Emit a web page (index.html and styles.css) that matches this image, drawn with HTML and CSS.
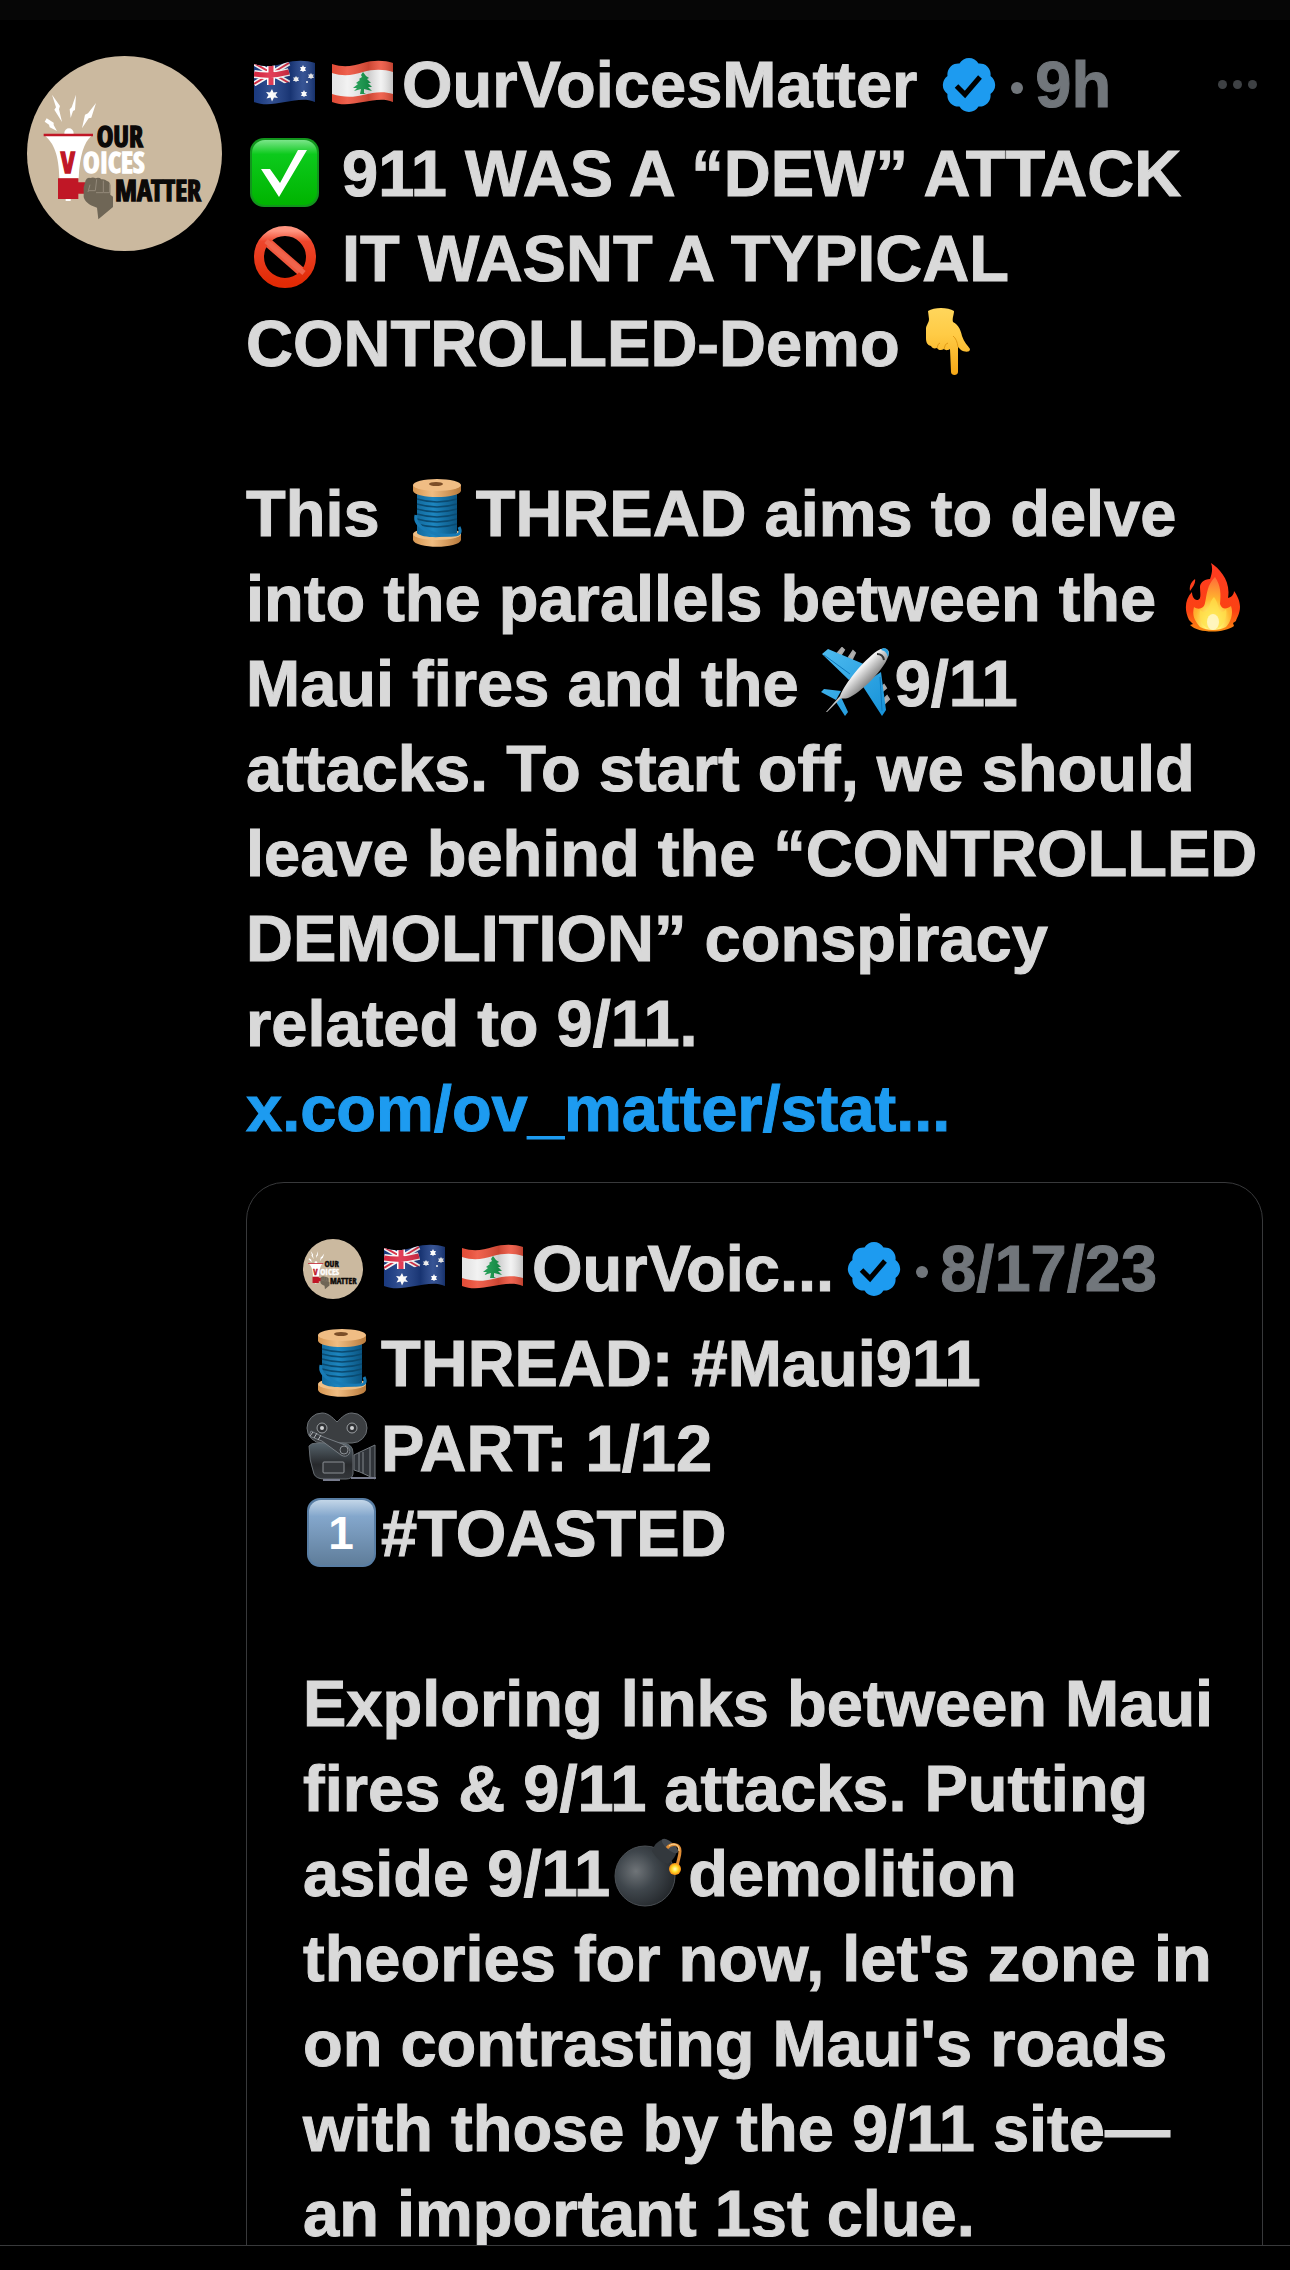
FILE: index.html
```
<!DOCTYPE html>
<html lang="en">
<head>
    <meta charset="UTF-8">
    <meta name="viewport" content="width=device-width, initial-scale=1.0">
    <title>OurVoicesMatter</title>
    <link rel="stylesheet" href="styles.css">
</head>
<body>

    <!-- Shared icons -->
    <svg class="sprite" aria-hidden="true">
        <defs>
            <linearGradient id="green" x1="0" y1="0" x2="0" y2="1">
                <stop offset="0" stop-color="#7be58a"/>
                <stop offset="0.22" stop-color="#0cca1c"/>
                <stop offset="1" stop-color="#00b400"/>
            </linearGradient>
            <linearGradient id="red" x1="0" y1="0" x2="0" y2="1">
                <stop offset="0" stop-color="#ff9580"/>
                <stop offset="0.2" stop-color="#ee462c"/>
                <stop offset="1" stop-color="#e12a05"/>
            </linearGradient>
            <linearGradient id="skin" x1="0" y1="0" x2="0" y2="1">
                <stop offset="0" stop-color="#ffd65c"/>
                <stop offset="0.4" stop-color="#ffcb45"/>
                <stop offset="1" stop-color="#f5a716"/>
            </linearGradient>
            <linearGradient id="wood" x1="0" y1="0" x2="1" y2="0">
                <stop offset="0" stop-color="#d79752"/>
                <stop offset="0.4" stop-color="#f0bd82"/>
                <stop offset="1" stop-color="#b87a3c"/>
            </linearGradient>
            <linearGradient id="thread" x1="0" y1="0" x2="1" y2="0">
                <stop offset="0" stop-color="#126a9d"/>
                <stop offset="0.4" stop-color="#1d86c0"/>
                <stop offset="1" stop-color="#0b5582"/>
            </linearGradient>
            <linearGradient id="flame" x1="0" y1="0" x2="0" y2="1">
                <stop offset="0" stop-color="#ff3a22"/>
                <stop offset="0.7" stop-color="#fb4213"/>
                <stop offset="1" stop-color="#f98b12"/>
            </linearGradient>
            <radialGradient id="flameCore" cx="0.5" cy="0.88" r="0.85">
                <stop offset="0" stop-color="#fffbe0"/>
                <stop offset="0.25" stop-color="#fff06c"/>
                <stop offset="0.55" stop-color="#ffb52e"/>
                <stop offset="1" stop-color="#ff7038"/>
            </radialGradient>
            <linearGradient id="hull" x1="0.2" y1="0.2" x2="0.7" y2="0.7">
                <stop offset="0.2" stop-color="#c4c4c4"/>
                <stop offset="0.45" stop-color="#f5f5f5"/>
                <stop offset="0.8" stop-color="#8c8c8c"/>
            </linearGradient>
            <linearGradient id="wing" x1="0" y1="0" x2="1" y2="1">
                <stop offset="0" stop-color="#4fbcf0"/>
                <stop offset="1" stop-color="#1591d8"/>
            </linearGradient>
            <linearGradient id="metal" x1="0" y1="0" x2="0" y2="1">
                <stop offset="0" stop-color="#56636b"/>
                <stop offset="0.6" stop-color="#27292c"/>
                <stop offset="1" stop-color="#34373b"/>
            </linearGradient>
            <linearGradient id="keycap" x1="0" y1="0" x2="0" y2="1">
                <stop offset="0" stop-color="#c3d6e8"/>
                <stop offset="0.25" stop-color="#84a7cc"/>
                <stop offset="1" stop-color="#5f7d9a"/>
            </linearGradient>
            <radialGradient id="iron" cx="0.35" cy="0.42" r="0.65">
                <stop offset="0" stop-color="#6f7478"/>
                <stop offset="0.5" stop-color="#3f464c"/>
                <stop offset="1" stop-color="#25292d"/>
            </radialGradient>
            <radialGradient id="spark">
                <stop offset="0" stop-color="#fffbd0"/>
                <stop offset="0.5" stop-color="#ffdf2b"/>
                <stop offset="1" stop-color="#f58a13"/>
            </radialGradient>
            <linearGradient id="wave" x1="0" y1="0" x2="1" y2="0">
                <stop offset="0" stop-color="#000" stop-opacity="0.05"/>
                <stop offset="0.25" stop-color="#fff" stop-opacity="0.1"/>
                <stop offset="0.6" stop-color="#000" stop-opacity="0.15"/>
                <stop offset="0.8" stop-color="#fff" stop-opacity="0.12"/>
                <stop offset="1" stop-color="#000" stop-opacity="0.2"/>
            </linearGradient>
            <clipPath id="flagShape">
                <path d="M8 16C20 20 29 18 39 15S60 12 69 15V54C60 50 50 52 39 54S18 58 8 54Z"/>
            </clipPath>
        </defs>

        <symbol id="avatar" viewBox="21 18 585 585">
            <circle cx="313.500" cy="310.500" r="292.500" fill="#cbb99f"/>
            <g fill="#fff">
                <path d="M96 134l24 34-3 10 9 38-23-37 5-7zM168 134l-3 46-6 3-7 21-3-26 6-6zM228 159l-14 44-8 2-20 30 9-41 9-4zM80 205l21 13 0 7 10 18-22-11-2-8-13-9z"/>
                <circle cx="147" cy="249" r="14"/>
                <path d="M76 258h138c-22 18-35 60-38 127h-58c-1-70-17-105-42-127zM137 445h15v8h-15z"/>
            </g>
            <path d="M71 251h148v8H71zM114 385h61v12h22v34h-22v16h-61z" fill="#c01726"/>
            <path d="M197 391q4-10 14-7 8-4 16 1 10-4 17 3 10-2 17 5 9 2 10 13v28l8 6v31l-44 37-4-35c-26-8-37-20-40-32V412z" fill="#6f6656"/>
            <path d="M230 388l-4 34h-20M250 392v36h-22M269 400v28h-18M210 404l-6 22" fill="none" stroke="#93897a" stroke-width="3"/>
            <g class="logo-text">
                <text x="230" y="290">OUR</text>
                <text x="122" y="370" class="logo-red">V</text>
                <text x="189" y="370" class="logo-white">OICES</text>
                <text x="285" y="454">MATTER</text>
            </g>
        </symbol>

        <symbol id="verified" viewBox="0 0 56 56">
            <path d="M18.500 6.500A11 11 0 0 1 37.500 6.500 11 11 0 0 1 49.500 19 11 11 0 0 1 49.500 37 11 11 0 0 1 37.500 49.500 11 11 0 0 1 18.500 49.500 11 11 0 0 1 6.500 37 11 11 0 0 1 6.500 19 11 11 0 0 1 18.500 6.500Z" fill="#1d9bf0"/>
            <path d="M15.500 29l8.500 8.500L39 20" fill="none" stroke="#000" stroke-width="5"/>
        </symbol>

        <symbol id="flag-au" viewBox="0 0 78 70">
            <g clip-path="url(#flagShape)">
                <path d="M8 10h61v50H8z" fill="#1c3d86"/>
                <g>
                    <path d="M8 15l35 20M43 15L8 36" stroke="#fff" stroke-width="5"/>
                    <path d="M8 15l35 20M43 15L8 36" stroke="#dc2c45" stroke-width="2"/>
                    <path d="M25 12v25M8 26q17 3 35-2" fill="none" stroke="#fff" stroke-width="8"/>
                    <path d="M25 12v25M8 26q17 3 35-2" fill="none" stroke="#e02a45" stroke-width="5"/>
                    <path d="M8 38q17 2 35-4v6H8z" fill="#1c3d86"/>
                </g>
                <path d="M26 41l1.500 3.500 4-.5-2 3 2.500 3-4-.5-2 4-1.500-4-4 1 2-3.500-2.500-3 4 .5z" fill="#fff"/>
                <path d="M57 17l1 2 2 0-1 2 1 2-2 0-1 1-1-1-2 0 1-2-1-2 2 0zM50 28l1 1.500h2l-1 1.500 1 2h-2l-1 1-1-1h-2l1-2-1-1.500h2zM65 25l1 1.500h2l-1 1.500 1 2h-2l-1 1-1-1h-2l1-2-1-1.500h2zM58 42l1 2h2l-1 2 1 2h-2l-1 1-1-1h-2l1-2-1-2h2z" fill="#fff"/>
                <circle cx="61" cy="34" r="1" fill="#fff"/>
                <path d="M8 10h61v50H8z" fill="url(#wave)"/>
            </g>
        </symbol>

        <symbol id="flag-lb" viewBox="0 0 78 70">
            <g clip-path="url(#flagShape)">
                <path d="M8 10h61v50H8z" fill="#ee513b"/>
                <path d="M8 25c12 4 21 2 31-1s21-3 30 0v22c-9-3-19-2-30 1s-21 2-31-1z" fill="#f1f1f1"/>
                <path d="M39 24l3 4 3 2-2 1 4 4-3 0 4 4-4 0 4 4-8-2 0 4 2 1-6 0 1-5-7 2 3-3-4 0 5-4-2-1 4-3-1-1 3-2-1-2z" fill="#18a050"/>
                <path d="M8 10h61v50H8z" fill="url(#wave)"/>
            </g>
        </symbol>

        <symbol id="check" viewBox="0 0 78 70">
            <rect x="4" y="1" width="69" height="69" rx="14" fill="#12951d"/>
            <rect x="6" y="3" width="65" height="65" rx="13" fill="url(#green)"/>
            <path d="M15 32h9l10 14 18-33h9L33 60z" fill="#fff"/>
        </symbol>

        <symbol id="prohibited" viewBox="0 0 78 70">
            <path d="M19 18l39 34" stroke="#ef573d" stroke-width="9"/>
            <circle cx="39" cy="35" r="26" fill="none" stroke="url(#red)" stroke-width="10"/>
            <path d="M20 19l38 32" stroke="#f0644c" stroke-width="5"/>
        </symbol>

        <symbol id="point-down" viewBox="9 0 78 70">
            <path d="M19 4c6-4 20-4 26 0 0 4-2 7-1 11 6 3 8 9 9 14 2 6 6 10 8 13 0 4-6 3-9 1l-3-3v25c0 4-7 4-7 0l-1-23c-3 2-5 1-6 0-3 2-6 1-7-1-3 1-5 0-6-2-4-1-5-4-5-8V22c0-4 3-6 3-10z" fill="url(#skin)"/>
            <path d="M28 41q1-5 3-5M35 42q1-6 4-6M49 40q-1-8-5-11" fill="none" stroke="#e29b16" stroke-width="1"/>
        </symbol>

        <symbol id="spool" viewBox="0 0 78 70">
            <path d="M15 58v5c2 9 46 9 48 0v-6c-4-8-44-8-48 1z" fill="url(#wood)"/>
            <ellipse cx="39" cy="57" rx="24" ry="6" fill="#efc087"/>
            <path d="M19 14h40v42c-4 5-36 6-40 0z" fill="url(#thread)"/>
            <path d="M19 22q20 6 40 0M19 27q20 6 40 0M19 32q20 6 40 0M19 37q20 6 40 0M19 42q20 6 40 0M19 47q20 6 40 0" fill="none" stroke="#0a4a70" stroke-width="1.500"/>
            <path d="M18 38c-3 12 18 22 38 20 7 0 7-4 5-8" fill="none" stroke="#187bb5" stroke-width="3"/>
            <path d="M15 8v6c3 8 45 8 48 0V8z" fill="url(#wood)"/>
            <ellipse cx="39" cy="8" rx="24" ry="6" fill="#f0bd84"/>
            <ellipse cx="38" cy="7" rx="7" ry="2" fill="#7c4e28"/>
        </symbol>

        <symbol id="fire" viewBox="0 0 78 70">
            <path d="M37 1c9 6 20 18 17 35 4-1 6-4 6-7 3 4 6 10 6 16 0 7-4 12-4 14l-3 2 1 3c-9 7-35 8-44-1l3-1-4-4c-5-10-4-21 3-28 0 4 2 8 5 8 5 0 3-8 3-13 0-4 4-8 10-8 2-5 3-11 1-16zM16 29c-1-5 1-9 5-12 1 4-2 8-5 12z" fill="url(#flame)"/>
            <path d="M41 15c6 9 6 17 5 27 2 6 7 5 11 2 3 8-1 17-5 21-7 4-19 4-26 0-6-7-8-12-6-20 4 3 10 2 11-4 2-9 2-18 10-26z" fill="url(#flameCore)"/>
            <path d="M40 35c4 5 5 14 7 15 2 0 4-1 5-3 2 8-3 19-12 21-9 0-16-9-14-20 2 2 5 3 7 1 3-5 3-10 7-14z" fill="#ffe04a" opacity="0.700"/>
            <ellipse cx="39" cy="60" rx="6" ry="8" fill="#fffbe0" opacity="0.700"/>
        </symbol>

        <symbol id="plane" viewBox="0 0 78 70">
            <path d="M20 7l5-6 2 2-4 6zM32 10l4-6 2 2-3 6zM60 44l7-6 2 3-7 6zM64 55l6-6 2 3-6 6z" fill="#b9b5b1" stroke="#aaa" stroke-width="2"/>
            <path d="M5 7l6-5 38 16-17 15zM64 25l5 38-4 6-20-31zM4 45l3-3 17 2-5 9zM24 50l7 15-3 4-9-14z" fill="url(#wing)"/>
            <path d="M7 8l26 19M63 30l2 34" stroke="#0d79bd" stroke-width="1"/>
            <path d="M9 65l14-16C28 36 47 13 60 4c6-4 12-3 12 2C70 21 42 47 31 51c-3 1-6 0-8 1L10 65z" fill="url(#hull)"/>
            <path d="M66 1c4 0 7 3 5 9-1-3-2-6-7-7z" fill="#28a2e2"/>
            <path d="M60 7q6 0 7 6" fill="none" stroke="#333" stroke-width="2"/>
        </symbol>

        <symbol id="camera" viewBox="0 0 78 70">
            <path d="M51 43l6-3 15-7v34l-15-7-6-2z" fill="#303439" stroke="#747a80" stroke-width="1"/>
            <path d="M56 41v18M60 40v21M67 36v28" stroke="#81878d" stroke-width="1"/>
            <path d="M19 1c6 0 10 4 15 9 5-5 9-9 15-9a15 15 0 0 1 0 30H19a15 15 0 0 1 0-30z" fill="#3b3e41" stroke="#6b7075" stroke-width="1"/>
            <circle cx="19" cy="16" r="5" fill="#303235" stroke="#999da0" stroke-width="1"/>
            <circle cx="49" cy="16" r="5" fill="#303235" stroke="#999da0" stroke-width="1"/>
            <circle cx="19" cy="16" r="2" fill="#d0d2d4"/>
            <circle cx="49" cy="16" r="2" fill="#d0d2d4"/>
            <path d="M6 34q2-3 8-3h26q10 1 10 10v21q-1 5-7 5H22q-9 0-11-5Q6 48 6 34z" fill="url(#metal)" stroke="#666c72" stroke-width="1"/>
            <path d="M8 19l10 5 24 9q7 4 4 9-3 4-8 1L19 29 6 24z" fill="#383b3f" stroke="#777d83" stroke-width="1"/>
            <path d="M7 24l3-4M11 26l3-5M15 28l3-5" stroke="#b3b7ba" stroke-width="1"/>
            <circle cx="41" cy="38" r="4" fill="#34373a" stroke="#8b9095" stroke-width="1"/>
            <rect x="20" y="50" width="21" height="11" rx="1" fill="#34373b" stroke="#8b9095" stroke-width="1"/>
            <path d="M20 68h17M48 66h25" stroke="#777b8c" stroke-width="2"/>
        </symbol>

        <symbol id="one" viewBox="0 0 78 70">
            <rect x="4" y="1" width="69" height="69" rx="13" fill="#587da3"/>
            <rect x="6" y="3" width="65" height="65" rx="12" fill="url(#keycap)"/>
            <text x="38" y="52" class="keycap-text">1</text>
        </symbol>

        <symbol id="bomb" viewBox="0 0 78 70">
            <circle cx="35" cy="39" r="30" fill="url(#iron)" stroke="#4a4f54" stroke-width="1"/>
            <path d="M42 14q3-9 11-12 10 3 14 12-2 8-9 13-10-2-16-13z" fill="#33383d"/>
            <ellipse cx="60" cy="9" rx="10" ry="4" transform="rotate(40 60 9)" fill="#454a50"/>
            <path d="M57 11c4-5 13-5 13 3 0 6-2 8-3 16" fill="none" stroke="#e08d36" stroke-width="3"/>
            <path d="M59 9c4-3 10-3 10 5" fill="none" stroke="#ffe0a0" stroke-width="1"/>
            <circle cx="65" cy="32" r="6" fill="url(#spark)"/>
        </symbol>
    </svg>

    <div class="top-bar"></div>

    <main class="feed">
        <article class="post">
            <svg class="avatar" role="img" aria-label="OurVoicesMatter"><use href="#avatar"/></svg>
            <div class="content">
                <header class="post-header">
                    <span class="name"><svg class="emoji"><use href="#flag-au"/></svg><svg class="emoji"><use href="#flag-lb"/></svg>OurVoicesMatter</span>
                    <svg class="verified" role="img" aria-label="Verified"><use href="#verified"/></svg>
                    <span class="dot"></span>
                    <time class="time">9h</time>
                    <button class="more" aria-label="More"><span></span><span></span><span></span></button>
                </header>

                <p class="text">
                    <svg class="emoji"><use href="#check"/></svg> 911 WAS A “DEW” ATTACK<br>
                    <svg class="emoji"><use href="#prohibited"/></svg> IT WASNT A TYPICAL<br>
                    CONTROLLED-Demo <svg class="emoji"><use href="#point-down"/></svg><br>
                    <br>
                    This <svg class="emoji"><use href="#spool"/></svg>THREAD aims to delve<br>
                    into the parallels between the <svg class="emoji"><use href="#fire"/></svg><br>
                    Maui fires and the <svg class="emoji"><use href="#plane"/></svg>9/11<br>
                    attacks. To start off, we should<br>
                    leave behind the “CONTROLLED<br>
                    DEMOLITION” conspiracy<br>
                    related to 9/11.<br>
                    <a href="#">x.com/ov_matter/stat...</a>
                </p>

                <!-- Quoted post -->
                <article class="quote">
                    <header class="post-header">
                        <svg class="avatar-small" role="img" aria-label="OurVoicesMatter"><use href="#avatar"/></svg>
                        <span class="name"><svg class="emoji"><use href="#flag-au"/></svg><svg class="emoji"><use href="#flag-lb"/></svg>OurVoic...</span>
                        <svg class="verified" role="img" aria-label="Verified"><use href="#verified"/></svg>
                        <span class="dot"></span>
                        <time class="time">8/17/23</time>
                    </header>
                    <p class="text">
                        <svg class="emoji"><use href="#spool"/></svg>THREAD: #Maui911<br>
                        <svg class="emoji"><use href="#camera"/></svg>PART: 1/12<br>
                        <svg class="emoji"><use href="#one"/></svg>#TOASTED<br>
                        <br>
                        Exploring links between Maui<br>
                        fires &amp; 9/11 attacks. Putting<br>
                        aside 9/11<svg class="emoji"><use href="#bomb"/></svg>demolition<br>
                        theories for now, let's zone in<br>
                        on contrasting Maui's roads<br>
                        with those by the 9/11 site—<br>
                        an important 1st clue.
                    </p>
                </article>
            </div>
        </article>
    </main>

    <div class="bottom-bar"></div>

</body>
</html>
```
FILE: styles.css
```
* {
    box-sizing: border-box;
}
body {
    display: flex;
    flex-direction: column;
    height: 100vh;
    margin: 0;
    background-color: #000;
    color: #d9d9d9;
    font-family: "Liberation Sans", Arial, sans-serif;
    font-size: 65px;
    font-weight: bold;
    line-height: 85px;
    -webkit-text-stroke: 1px;
}
.sprite {
    position: absolute;
    width: 0;
    height: 0;
}
.top-bar {
    flex: none;
    height: 20px;
    background-color: #060606;
}
.bottom-bar {
    flex: none;
    height: 24px;
}
.feed {
    flex: 1;
    min-height: 0;
    overflow: hidden;
    border-bottom: 1px solid #38393b;
}
.post {
    display: flex;
    gap: 24px;
    padding: 22px 27px 0;
}
.avatar {
    flex: none;
    width: 195px;
    height: 195px;
    margin-top: 14px;
}
.content {
    flex: 1;
    min-width: 0;
}
.post-header {
    display: flex;
    align-items: center;
    margin-bottom: 4px;
    white-space: nowrap;
}
.avatar-small {
    flex: none;
    width: 60px;
    height: 60px;
    margin-right: 13px;
}
.verified {
    flex: none;
    width: 56px;
    height: 56px;
    margin-left: 24px;
}
.dot {
    width: 12px;
    height: 12px;
    margin: 6px 12px 0 14px;
    border-radius: 50%;
    background-color: #71767b;
}
.time {
    color: #71767b;
}
.more {
    display: flex;
    gap: 6px;
    margin-left: auto;
    padding: 6px;
    border: none;
    background: none;
    cursor: pointer;
}
.more span {
    width: 9px;
    height: 9px;
    border-radius: 50%;
    background-color: #3e4144;
}
.text {
    margin: 0;
}
.text a {
    color: #1d9bf0;
    text-decoration: none;
}
.text a:hover {
    text-decoration: underline;
}
.emoji {
    width: 78px;
    height: 70px;
    vertical-align: -11px;
}
.quote {
    margin-top: 31px;
    padding: 43px 24px 60px 56px;
    border: 1px solid #38393b;
    border-radius: 38px;
}
.quote .post-header {
    margin-bottom: 10px;
}
.quote .verified {
    margin-left: 12px;
}

/* Text inside the icons */
.logo-text {
    font-family: "Open Sans Condensed", "Liberation Sans Narrow", "Liberation Sans", sans-serif;
    font-size: 84px;
    font-weight: bold;
    fill: #0b0908;
    stroke: #0b0908;
    stroke-width: 4px;
    -webkit-text-stroke: 4px #0b0908;
}
.logo-red {
    fill: #c01726;
    stroke: #c01726;
    -webkit-text-stroke: 4px #c01726;
}
.logo-white {
    fill: #fff;
    stroke: #fff;
    -webkit-text-stroke: 4px #fff;
}
.keycap-text {
    font-size: 46px;
    font-weight: bold;
    text-anchor: middle;
    fill: #fff;
}
```
